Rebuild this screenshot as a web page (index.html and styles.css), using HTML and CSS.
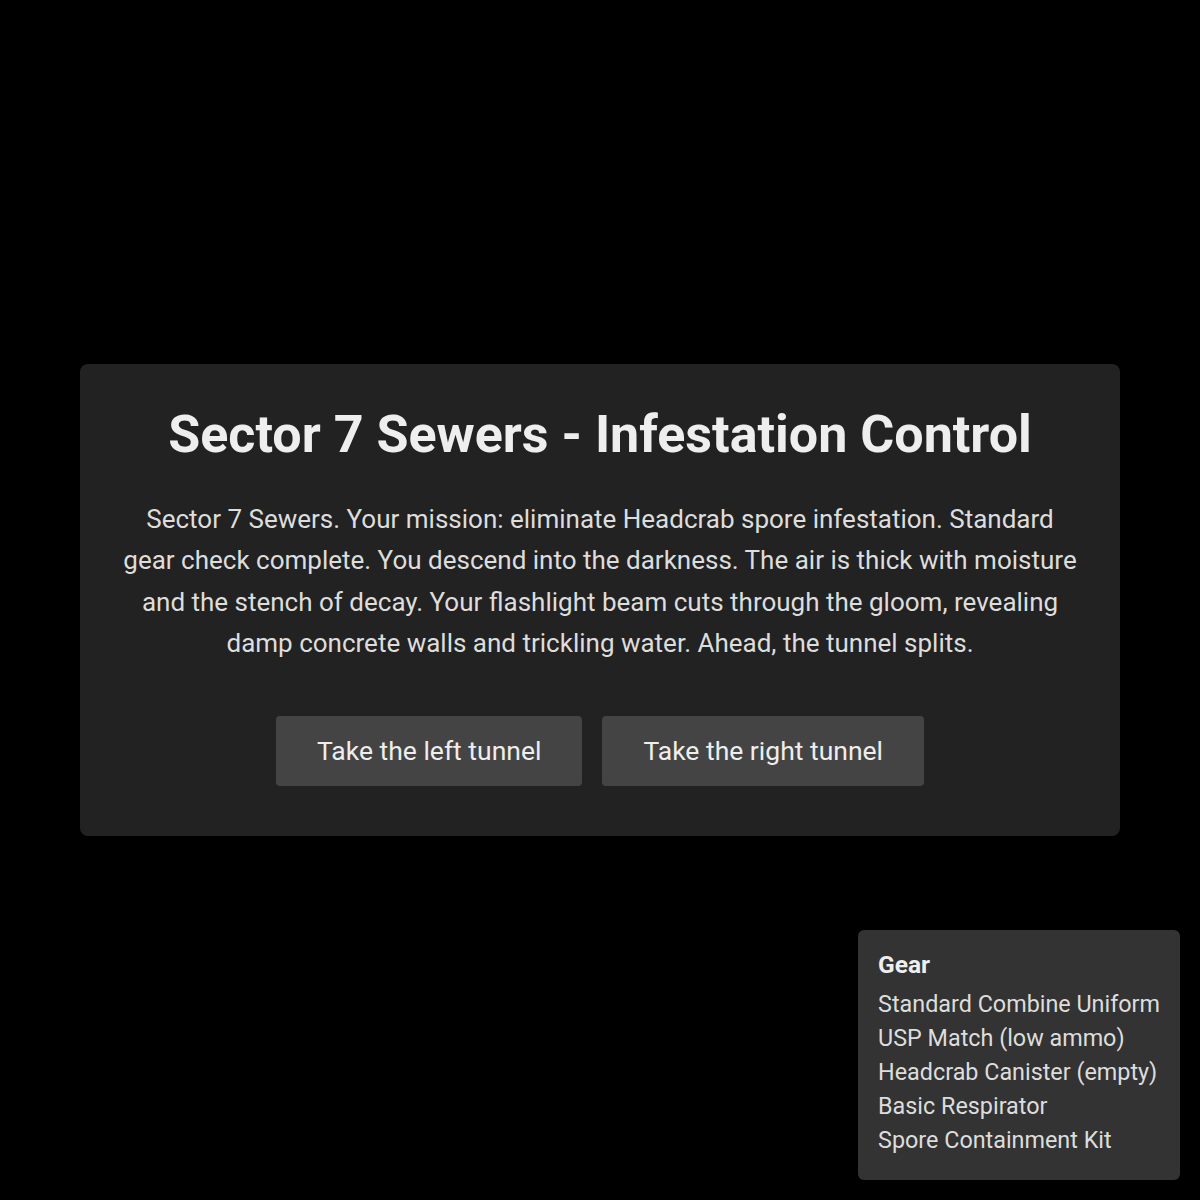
FILE: index.html
```html
<!DOCTYPE html>
<html lang="en">
<head>
    <meta charset="UTF-8">
    <meta name="viewport" content="width=device-width, initial-scale=1.0">
    <title>Sector 7 Sewers</title>
    <link rel="stylesheet" href="styles.css">
</head>
<body>
    <div class="scene">
        <h1>Sector 7 Sewers - Infestation Control</h1>
        <p class="story">Sector 7 Sewers. Your mission: eliminate Headcrab spore infestation. Standard gear check complete. You descend into the darkness. The air is thick with moisture and the stench of decay. Your flashlight beam cuts through the gloom, revealing damp concrete walls and trickling water. Ahead, the tunnel splits.</p>
        <div class="choices">
            <button>Take the left tunnel</button>
            <button>Take the right tunnel</button>
        </div>
    </div>

    <div class="gear">
        <h3>Gear</h3>
        <ul>
            <li>Standard Combine Uniform</li>
            <li>USP Match (low ammo)</li>
            <li>Headcrab Canister (empty)</li>
            <li>Basic Respirator</li>
            <li>Spore Containment Kit</li>
        </ul>
    </div>
</body>
</html>
```

FILE: styles.css
```css
body {
    font-family: Roboto, "Liberation Sans", sans-serif;
    background-color: #000;
    color: #ddd;
    margin: 0;
    min-height: 100vh;
    display: flex;
    align-items: center;
    justify-content: center;
}
.scene {
    background: #222;
    padding: 40px 40px 50px;
    border-radius: 8px;
    width: 960px;
    text-align: center;
}
h1 {
    font-size: 52px;
    line-height: 1.2;
    color: #eee;
    margin: 0 0 33px;
}
.story {
    font-size: 26px;
    line-height: 41.3px;
    margin: 0 0 52px;
}
.choices {
    display: flex;
    justify-content: center;
    gap: 20px;
}
.choices button {
    font-family: inherit;
    font-size: 26.5px;
    line-height: 30px;
    color: #eee;
    background-color: #444;
    border: none;
    border-radius: 4px;
    padding: 20px 41px;
    cursor: pointer;
}
.choices button:hover {
    background-color: #555;
}
.gear {
    position: fixed;
    right: 20px;
    bottom: 20px;
    background: #333;
    border-radius: 6px;
    padding: 20px 20px 23px;
}
.gear h3 {
    font-size: 24.5px;
    line-height: 30px;
    color: #eee;
    margin: 0 0 7px;
}
.gear ul {
    list-style: none;
    padding: 0;
    margin: 0;
}
.gear li {
    font-size: 23.35px;
    line-height: 34px;
}
```
